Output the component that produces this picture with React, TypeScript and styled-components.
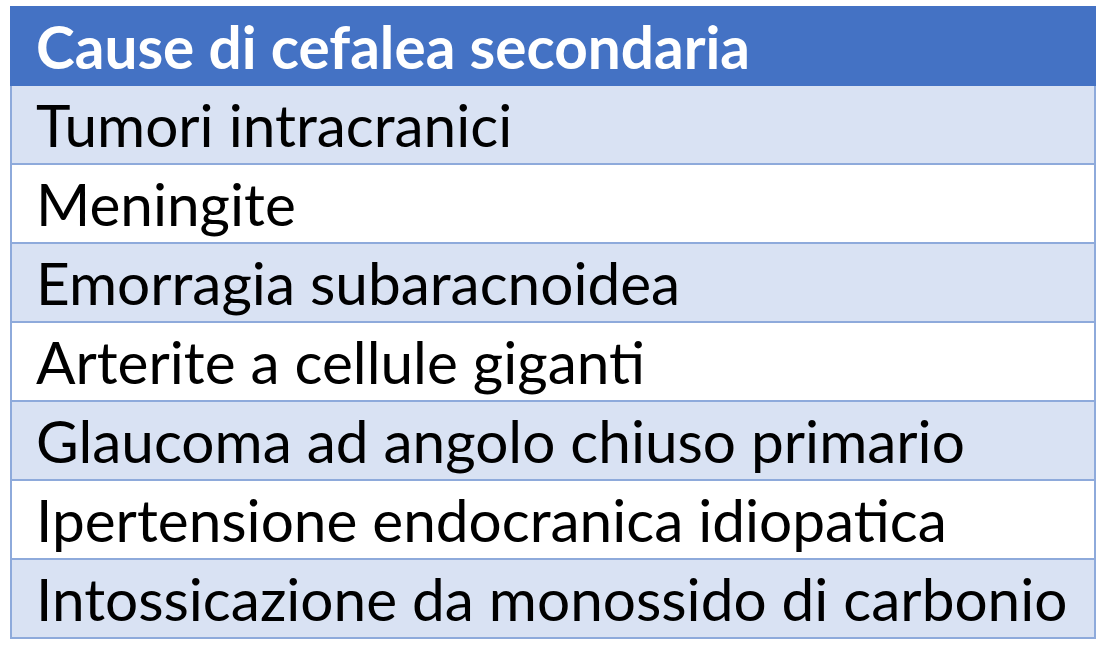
import styled, { createGlobalStyle } from "styled-components";

const causes = [
  "Tumori intracranici",
  "Meningite",
  "Emorragia subaracnoidea",
  "Arterite a cellule giganti",
  "Glaucoma ad angolo chiuso primario",
  "Ipertensione endocranica idiopatica",
  "Intossicazione da monossido di carbonio",
];

const GlobalStyle = createGlobalStyle`
  body {
    margin: 0;
    background: #ffffff;
    font-family: Lato, "Open Sans", sans-serif;
  }
`;

export default function App() {
  return (
    <>
      <GlobalStyle />
      <Page>
        <Table>
          <Header>Cause di cefalea secondaria</Header>
          {causes.map((c, i) => (
            <Row key={c} $shaded={i % 2 === 0}>
              {c}
            </Row>
          ))}
        </Table>
      </Page>
    </>
  );
}

const Page = styled.div`
  padding: 6px 10px 0 10px;
  width: 1086px;
`;

const Table = styled.div`
  display: flex;
  flex-direction: column;
`;

const Header = styled.div`
  height: 80px;
  background: #4472c4;
  color: #ffffff;
  font-weight: 700;
  font-size: 58.5px;
  line-height: 1;
  display: flex;
  align-items: center;
  padding-left: 26px;
  box-sizing: border-box;
`;

const Row = styled.div<{ $shaded: boolean }>`
  height: 79px;
  box-sizing: border-box;
  background: ${(p) => (p.$shaded ? "#d9e2f3" : "#ffffff")};
  border: 2px solid #8eaadb;
  border-top: none;
  color: #000000;
  font-size: 58.5px;
  line-height: 1;
  display: flex;
  align-items: center;
  padding-left: 24px;
`;
